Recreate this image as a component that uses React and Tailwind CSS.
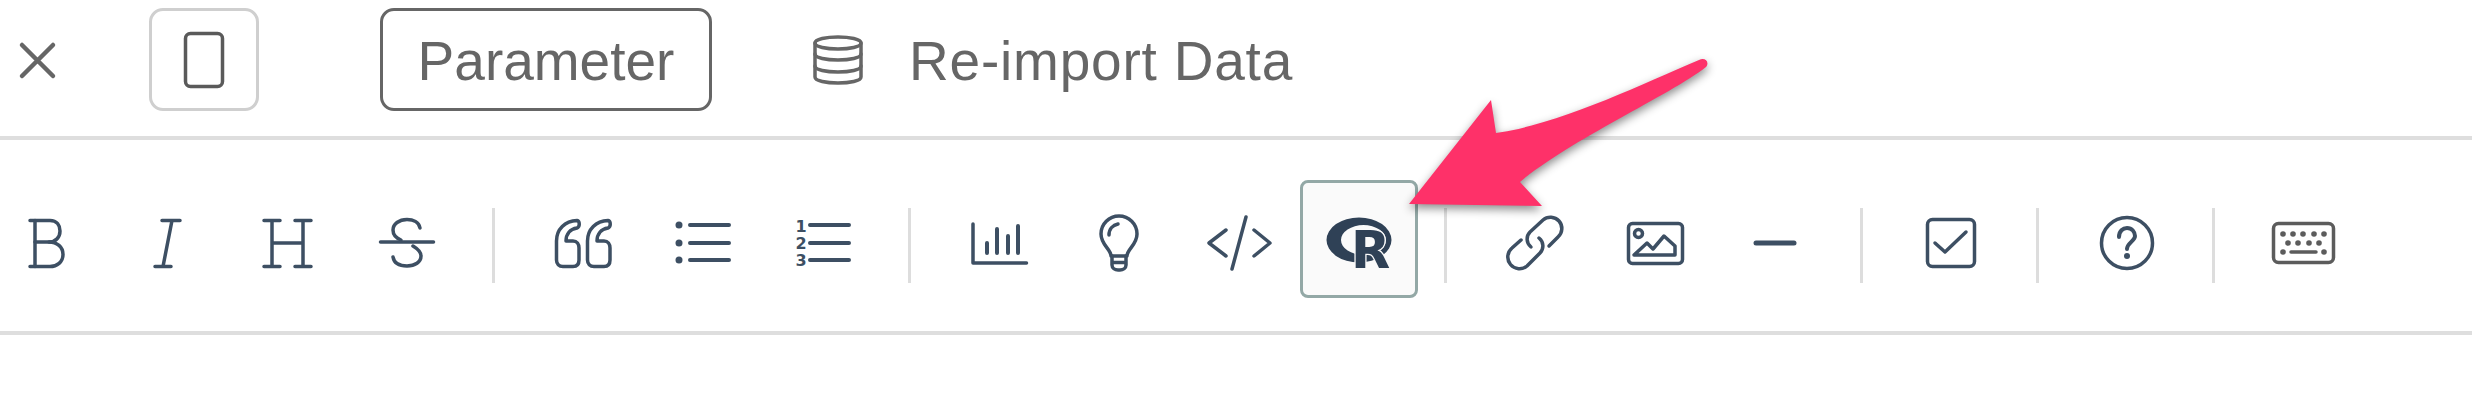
const Ico = ({ w, h, children, className = 'text-[#3d4f63]', sw = 3.5 }) => (
  <svg width={w} height={h} viewBox={`0 0 ${w} ${h}`} fill="none" stroke="currentColor" strokeWidth={sw} strokeLinecap="round" strokeLinejoin="round" className={`overflow-visible ${className}`}>
    {children}
  </svg>
);

const Bold = () => (
  <Ico w={36} h={49}>
    <path d="M1 1.5H21C28 1.5 31 6.5 31 12C31 18 27 23 20 23H6" />
    <path d="M20 23C28 23 34 28 34 35.5C34 43 28 47.5 21 47.5H1" />
    <path d="M6 1.5V47.5" />
  </Ico>
);
const Italic = () => (
  <Ico w={27} h={49}>
    <path d="M8 1.5H26M1 47.5H17M18 1.5L9 47.5" />
  </Ico>
);
const Heading = () => (
  <Ico w={49} h={49}>
    <path d="M1 1.5H17M32 1.5H48M1 47.5H17M32 47.5H48M9 1.5V47.5M40 1.5V47.5M9 24H40" />
  </Ico>
);
const Strike = () => (
  <Ico w={56} h={50}>
    <path d="M41 10C40 4 34 1.5 28 1.5C20 1.5 14 6 14 12C14 17 17 20 22 22" />
    <path d="M34 28C39 31 42 34 42 38C42 44 36 48 28 48C20 48 15 45 14 39" />
    <path d="M1.5 24H54.5" />
  </Ico>
);
const Quote = () => (
  <Ico w={56} h={49}>
    <path d="M22 1.5C10 2 1.5 10 1.5 22V41C1.5 45 4 47.5 8 47.5H18C22 47.5 24 45 24 41V29C24 25 22 22 18 22H11C11 15 15 10 22 9C25 8 25 2 22 1.5Z" />
    <path transform="translate(31 0)" d="M22 1.5C10 2 1.5 10 1.5 22V41C1.5 45 4 47.5 8 47.5H18C22 47.5 24 45 24 41V29C24 25 22 22 18 22H11C11 15 15 10 22 9C25 8 25 2 22 1.5Z" />
  </Ico>
);
const BulletList = () => (
  <Ico w={56} h={50} sw={4}>
    <path d="M15 7H54M15 25H54M15 42H54" />
    <g fill="currentColor" stroke="none">
      <circle cx="4" cy="7" r="3.5" />
      <circle cx="4" cy="25" r="3.5" />
      <circle cx="4" cy="42" r="3.5" />
    </g>
  </Ico>
);
const NumberList = () => (
  <Ico w={56} h={50} sw={4}>
    <path d="M15 7H54M15 25H54M15 42H54" />
    <g fill="currentColor" stroke="none" fontFamily="'DejaVu Sans', sans-serif" fontWeight="700" fontSize="16" textAnchor="middle">
      <text x="6" y="14">1</text>
      <text x="6" y="31">2</text>
      <text x="6" y="48">3</text>
    </g>
  </Ico>
);
const Chart = () => (
  <Ico w={57} h={43}>
    <path d="M2 2V41H55.5" />
    <path strokeWidth="4" d="M16 21V31M26 7V31M37 14V31M47 4V31" />
  </Ico>
);
const Bulb = () => (
  <Ico w={40} h={56}>
    <path d="M12 41C12 34 2 30 2 19A18 18 0 0 1 38 19C38 30 28 34 28 41Z" />
    <path d="M13 41V50C13 53 16 55 19 55H21C24 55 27 53 27 50V41M13 47.5H27" />
    <path d="M10 20C10 14 14 10 19 9" />
  </Ico>
);
const Code = () => (
  <Ico w={65} h={56}>
    <path d="M19 15L2 28L19 41M39 2L25 54M47 15L63 28L47 41" />
  </Ico>
);
const RLogo = () => (
  <svg width="66" height="52" viewBox="0 0 66 52" className="overflow-visible text-[#2f4156]">
    <path fill="currentColor" fillRule="evenodd" d="M0.5 23A32.5 22.5 0 1 0 65.5 23A32.5 22.5 0 1 0 0.5 23ZM15 23A22.5 15 0 1 1 60 23A22.5 15 0 1 1 15 23Z" />
    <text x="25" y="51" fill="currentColor" stroke="#fafafa" strokeWidth="2.5" paintOrder="stroke" fontFamily="'DejaVu Sans', sans-serif" fontWeight="700" fontSize="51">R</text>
  </svg>
);
const Chain = () => (
  <Ico w={56} h={56}>
    <path d="M42 31L51 22A10.5 10.5 0 0 0 36 5L23 17C19 21 19 28 24 32" />
    <path d="M14 25L5 33A10.5 10.5 0 0 0 20 51L33 38C37 34 37 27 32 23" />
  </Ico>
);
const Picture = () => (
  <Ico w={57} h={43}>
    <rect x="1.5" y="1.5" width="54" height="40" rx="4" />
    <circle cx="11.5" cy="11.5" r="4" />
    <path d="M7 33L20 21L26 27L37 14L48 24V33Z" />
  </Ico>
);
const Minus = () => (
  <Ico w={44} h={8} sw={5}>
    <path d="M3 4H41" />
  </Ico>
);
const Check = () => (
  <Ico w={50} h={50}>
    <rect x="1.5" y="1.5" width="47" height="47" rx="5" />
    <path d="M9 25L19 34L40 14" />
  </Ico>
);
const Help = () => (
  <Ico w={54} h={54}>
    <circle cx="27" cy="27" r="25.5" />
    <path strokeWidth="4" d="M19 21C19 15 23 12 27 12C32 12 35 16 35 20C35 25 27 27 27 33" />
    <circle cx="27" cy="40" r="3" fill="currentColor" stroke="none" />
  </Ico>
);
const Keyboard = () => (
  <Ico w={63} h={42} className="text-[#5c5c5c]">
    <rect x="1.5" y="1.5" width="60" height="39" rx="5" />
    <path d="M19 30H44" />
    <g fill="currentColor" stroke="none">
      {[11, 21, 31, 42, 52].map((x) => <circle key={x} cx={x} cy="12" r="2.8" />)}
      {[16, 26, 37, 47].map((x) => <circle key={x} cx={x} cy="21" r="2.8" />)}
      {[11, 52].map((x) => <circle key={x} cx={x} cy="30" r="2.8" />)}
    </g>
  </Ico>
);

const Tool = ({ children }) => (
  <div className="flex h-[118px] w-[120px] shrink-0 items-center justify-center pt-2">{children}</div>
);
const Sep = () => <div className="ml-[25px] mr-[28px] mt-[28px] h-[75px] w-[3px] shrink-0 bg-[#dddddd]" />;

export default function App() {
  return (
    <div className="relative h-[400px] w-[2472px] overflow-hidden bg-white font-['Liberation_Sans',sans-serif]">
      <div className="flex h-[140px] items-start border-b-4 border-[#dedede] pt-2 text-[55px] leading-none text-[#666666]">
        <div className="ml-5 flex h-[103px] items-center pt-0.5">
          <Ico w={35} h={35} sw={4.5} className="text-[#666666]">
            <path d="M2 2L33 33M33 2L2 33" />
          </Ico>
        </div>
        <div className="ml-[94px] flex h-[103px] w-[110px] items-center justify-center rounded-[14px] border-[3px] border-[#cfcfcf]">
          <Ico w={40} h={56} className="text-[#5a5a5a]">
            <rect x="1.5" y="1.5" width="37" height="53" rx="5" />
          </Ico>
        </div>
        <div className="ml-[121px] flex h-[103px] w-[332px] items-center justify-center rounded-[14px] border-[3px] border-[#666666] pt-1">
          Parameter
        </div>
        <div className="ml-[101px] flex h-[103px] items-center">
          <Ico w={50} h={56} className="text-[#666666]">
            <path d="M2 11C2 3 48 3 48 11C48 19 2 19 2 11Z" />
            <path d="M2 11V45C2 53 48 53 48 45V11" />
            <path d="M2 22C2 30 48 30 48 22M2 34C2 42 48 42 48 34" />
          </Ico>
          <span className="ml-[46px] pt-1 tracking-[0.8px]">Re-import Data</span>
        </div>
      </div>

      <div className="-ml-[13px] flex h-[195px] items-start border-b-4 border-[#dedede] pt-10">
        <Tool><Bold /></Tool>
        <Tool><Italic /></Tool>
        <Tool><Heading /></Tool>
        <Tool><Strike /></Tool>
        <Sep />
        <Tool><Quote /></Tool>
        <Tool><BulletList /></Tool>
        <Tool><NumberList /></Tool>
        <Sep />
        <Tool><Chart /></Tool>
        <Tool><Bulb /></Tool>
        <Tool><Code /></Tool>
        <div className="mx-px flex h-[118px] w-[118px] shrink-0 items-center justify-center rounded-lg border-[3px] border-[#93a8a6] bg-[#fafafa] pt-2">
          <RLogo />
        </div>
        <Sep />
        <Tool><Chain /></Tool>
        <Tool><Picture /></Tool>
        <Tool><Minus /></Tool>
        <Sep />
        <Tool><Check /></Tool>
        <Sep />
        <Tool><Help /></Tool>
        <Sep />
        <Tool><Keyboard /></Tool>
      </div>

      {/* annotation arrow on top of the toolbar */}
      <svg width="2472" height="400" viewBox="0 0 2472 400" className="absolute left-0 top-0 drop-shadow-[0_4px_5px_rgba(0,0,0,0.45)]">
        <path fill="#fe3169" d="M1409 204L1491 100L1496 133C1560 124 1640 85 1699 60C1705 57 1710 62 1706 67C1670 95 1570 140 1520 182L1542 206Z" />
      </svg>
    </div>
  );
}
